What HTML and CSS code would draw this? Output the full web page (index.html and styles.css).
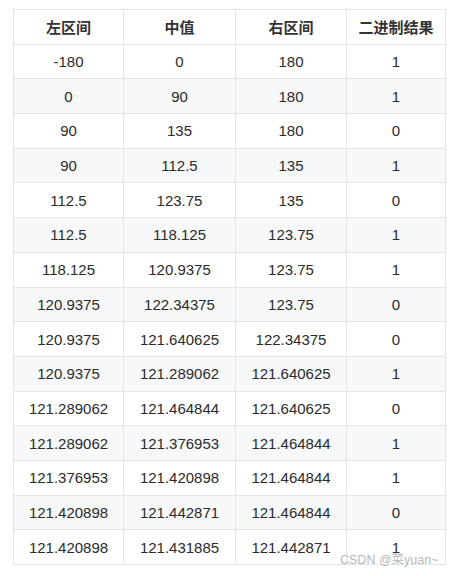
FILE: index.html
```html
<!DOCTYPE html>
<html>
<head>
<meta charset="utf-8">
<link rel="stylesheet" href="styles.css">
</head>
<body>
<div class="wrap">
<table class="grid">
<colgroup><col class="c1"><col class="c2"><col class="c3"><col class="c4"></colgroup>
<thead>
<tr><th>左区间</th><th>中值</th><th>右区间</th><th>二进制结果</th></tr>
</thead>
<tbody>
<tr><td>-180</td><td>0</td><td>180</td><td>1</td></tr>
<tr><td>0</td><td>90</td><td>180</td><td>1</td></tr>
<tr><td>90</td><td>135</td><td>180</td><td>0</td></tr>
<tr><td>90</td><td>112.5</td><td>135</td><td>1</td></tr>
<tr><td>112.5</td><td>123.75</td><td>135</td><td>0</td></tr>
<tr><td>112.5</td><td>118.125</td><td>123.75</td><td>1</td></tr>
<tr><td>118.125</td><td>120.9375</td><td>123.75</td><td>1</td></tr>
<tr><td>120.9375</td><td>122.34375</td><td>123.75</td><td>0</td></tr>
<tr><td>120.9375</td><td>121.640625</td><td>122.34375</td><td>0</td></tr>
<tr><td>120.9375</td><td>121.289062</td><td>121.640625</td><td>1</td></tr>
<tr><td>121.289062</td><td>121.464844</td><td>121.640625</td><td>0</td></tr>
<tr><td>121.289062</td><td>121.376953</td><td>121.464844</td><td>1</td></tr>
<tr><td>121.376953</td><td>121.420898</td><td>121.464844</td><td>1</td></tr>
<tr><td>121.420898</td><td>121.442871</td><td>121.464844</td><td>0</td></tr>
<tr><td>121.420898</td><td>121.431885</td><td>121.442871</td><td>1</td></tr>
</tbody>
</table>
<div class="mark">CSDN @菜yuan~</div>
</div>
</body>
</html>
```
FILE: styles.css
```css
html, body {
  margin: 0;
  padding: 0;
  background: #ffffff;
}
.wrap {
  position: relative;
  padding: 9px 0 0 13px;
  width: 459px;
  height: 576px;
  box-sizing: border-box;
}
.grid {
  border-collapse: collapse;
  table-layout: fixed;
  width: 432px;
  font-family: "Liberation Sans", "Noto Sans CJK SC", sans-serif;
  font-size: 15px;
  color: #2b2b2b;
}
.c1 { width: 110px; }
.c2 { width: 112px; }
.c3 { width: 111px; }
.c4 { width: 99px; }
.grid th, .grid td {
  border: 1px solid #e3e5e8;
  text-align: center;
  padding: 0;
  height: 33.7px;
  white-space: nowrap;
}
.grid th {
  font-family: "Noto Sans CJK SC", sans-serif;
  font-weight: 600;
  font-size: 15px;
  color: #333333;
}
.grid tbody tr:nth-child(2n) {
  background: #f6f8fa;
}
.mark {
  position: absolute;
  left: 340px;
  top: 549px;
  font-family: "Liberation Sans", "Noto Sans CJK SC", sans-serif;
  font-size: 12.5px;
  color: #b8b8b8;
  white-space: nowrap;
}
```
